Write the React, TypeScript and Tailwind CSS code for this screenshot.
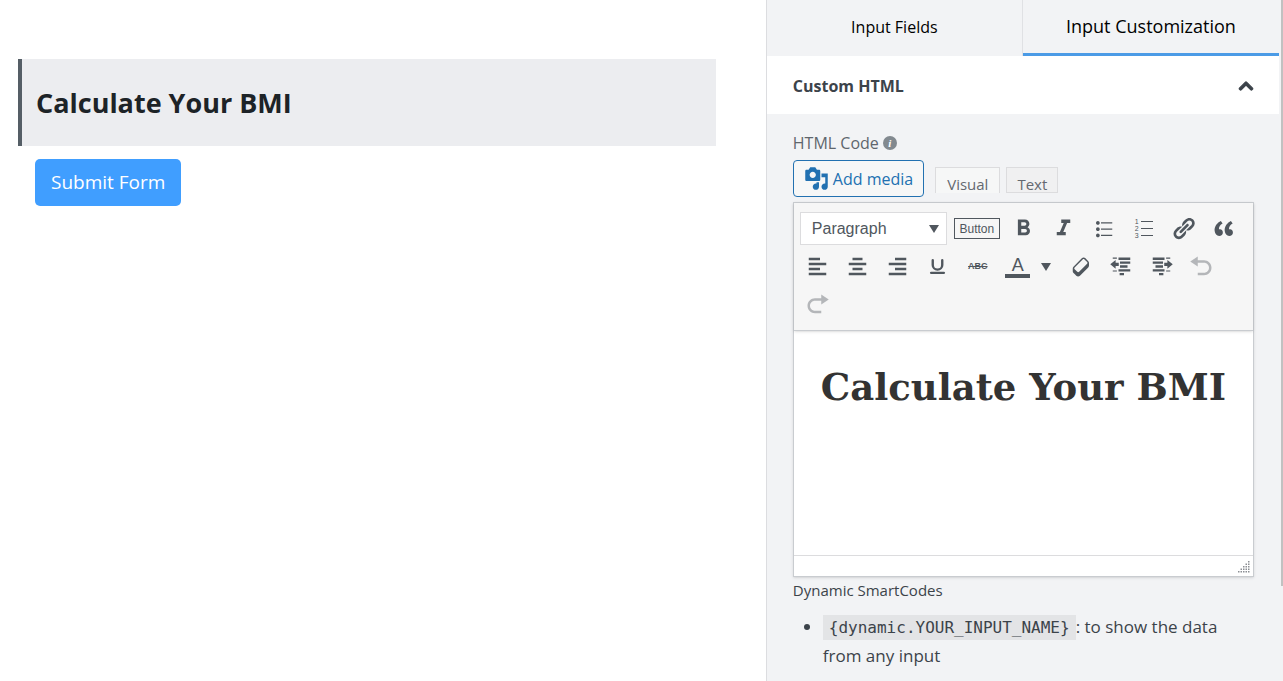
import { useState } from "react";
import type { ReactNode } from "react";
import { Underline } from "lucide-react";
import { FaChevronUp } from "react-icons/fa";
import { MdFormatBold, MdFormatItalic } from "react-icons/md";

const icons = {
  media:
    "M13 11V4c0-.55-.45-1-1-1h-1.67L9 1H5L3.67 3H2c-.55 0-1 .45-1 1v7c0 .55.45 1 1 1h10c.55 0 1-.45 1-1zM7 4.5c1.38 0 2.5 1.12 2.5 2.5S8.38 9.5 7 9.5 4.5 8.38 4.5 7 5.62 4.5 7 4.5zM14 6h5v10.5c0 1.38-1.12 2.5-2.5 2.5S14 17.88 14 16.5s1.12-2.5 2.5-2.5c.17 0 .34.02.5.05V9h-3V6zm-4 8.05V13h2v3.5c0 1.38-1.12 2.5-2.5 2.5S7 17.88 7 16.5 8.12 14 9.5 14c.17 0 .34.02.5.05z",
  bullets:
    "M5.5 7C4.67 7 4 6.33 4 5.5 4 4.68 4.67 4 5.5 4 6.32 4 7 4.68 7 5.5 7 6.33 6.32 7 5.5 7zM8 5h9v1H8V5zm-2.5 7c-.83 0-1.5-.67-1.5-1.5C4 9.68 4.67 9 5.5 9c.82 0 1.5.68 1.5 1.5 0 .83-.68 1.5-1.5 1.5zM8 10h9v1H8v-1zm-2.5 7c-.83 0-1.5-.67-1.5-1.5 0-.82.67-1.5 1.5-1.5.82 0 1.5.68 1.5 1.5 0 .83-.68 1.5-1.5 1.5zM8 15h9v1H8v-1z",
  link: "M17.74 2.76c1.68 1.69 1.68 4.41 0 6.1l-1.53 1.52c-1.12 1.12-2.7 1.47-4.14 1.09l2.62-2.61.76-.77.76-.76c.84-.84.84-2.2 0-3.04-.84-.85-2.2-.85-3.04 0l-.77.76-3.38 3.38c-.37-1.44-.02-3.02 1.1-4.14l1.52-1.53c1.69-1.68 4.42-1.68 6.1 0zM8.59 13.43l5.34-5.34c.42-.42.42-1.1 0-1.52-.44-.43-1.13-.39-1.53 0l-5.33 5.34c-.42.42-.42 1.1 0 1.52.44.43 1.13.39 1.52 0zm-.76 2.29l4.14-4.15c.38 1.44.03 3.02-1.09 4.14l-1.52 1.53c-1.69 1.68-4.41 1.68-6.1 0-1.68-1.68-1.68-4.42 0-6.1l1.53-1.52c1.12-1.12 2.7-1.47 4.14-1.1l-4.14 4.15c-.85.84-.85 2.2 0 3.05.84.84 2.2.84 3.04 0z",
  quote:
    "M9.49 13.22c0-.74-.2-1.38-.61-1.9-.62-.78-1.83-.88-2.53-.72-.29-1.65 1.11-3.75 2.92-4.65L7.88 4c-2.73 1.3-5.42 4.28-4.96 8.05C3.21 14.43 4.59 16 6.54 16c.85 0 1.56-.25 2.12-.75s.83-1.18.83-2.03zm8.05 0c0-.74-.2-1.38-.61-1.9-.63-.78-1.83-.88-2.53-.72-.29-1.65 1.11-3.75 2.92-4.65L15.93 4c-2.73 1.3-5.41 4.28-4.95 8.05.29 2.38 1.66 3.95 3.61 3.95.85 0 1.56-.25 2.12-.75s.83-1.18.83-2.03z",
  left: "M12 5V3H3v2h9zm5 4V7H3v2h14zm-5 4v-2H3v2h9zm5 4v-2H3v2h14z",
  center: "M14 5V3H6v2h8zm3 4V7H3v2h14zm-3 4v-2H6v2h8zm3 4v-2H3v2h14z",
  right: "M17 5V3H8v2h9zm0 4V7H3v2h14zm0 4v-2H8v2h9zm0 4v-2H3v2h14z",
  eraser:
    "M14.29 4.59l1.1 1.11c.41.4.61.94.61 1.47v2.12c0 .53-.2 1.07-.61 1.47l-6.63 6.63c-.4.41-.94.61-1.47.61s-1.07-.2-1.47-.61l-1.11-1.1-1.1-1.11c-.41-.4-.61-.94-.61-1.47v-2.12c0-.54.2-1.07.61-1.48l6.63-6.62c.4-.41.94-.61 1.47-.61s1.06.2 1.47.61zm-6.21 9.7l6.42-6.42c.39-.39.39-1.03 0-1.43L12.36 4.3c-.19-.19-.45-.29-.72-.29s-.52.1-.71.29l-6.42 6.42c-.39.4-.39 1.04 0 1.43l2.14 2.14c.38.38 1.04.38 1.43 0z",
  outdent:
    "M3 2.800h3.300v.9H3zM7.600 2.800H17v1.900H7.600zM8.800 5.900H17v1.900H8.800zM5.300 4.800v2.200h2.500v2.500H5.300v2.200L1 8.250zM8.800 9h6v1.900h-6zM7.600 12.100H17V14H7.600zM3 13.100h3.300v.9H3zM8.500 15.200H12V17H8.500z",
  indent:
    "M13.700 2.800H17v.9h-3.300zM3 2.800h9.400v1.900H3zM3 5.900h8.200v1.900H3zM14.700 4.800v2.200h-2.500v2.500h2.500v2.200L19 8.250zM5.200 9h6v1.900h-6zM3 12.100h9.400V14H3zM13.700 13.100H17v.9h-3.300zM8 15.200h3.500V17H8z",
  undo: "M12 5H7V2L1 6l6 4V7h5c2.2 0 4 1.8 4 4s-1.8 4-4 4H7v2h5c3.3 0 6-2.7 6-6s-2.7-6-6-6z",
  redo: "M8 5h5V2l6 4-6 4V7H8c-2.2 0-4 1.8-4 4s1.8 4 4 4h5v2H8c-3.3 0-6-2.7-6-6s2.7-6 6-6z",
};

const Icon = ({ name }: { name: keyof typeof icons }) => (
  <svg viewBox="0 0 20 20" className="size-[25px] shrink-0" fill="currentColor" aria-hidden="true">
    <path d={icons[name]} />
  </svg>
);

const Caret = () => (
  <svg viewBox="0 0 10 8" className="h-2 w-2.5" aria-hidden="true">
    <path d="M0 0h10L5 8z" fill="#50575e" />
  </svg>
);

const Tool = ({ label, children, disabled }: { label: string; children: ReactNode; disabled?: boolean }) => (
  <button
    type="button"
    aria-label={label}
    disabled={disabled}
    className="flex h-[37px] w-10 items-center justify-center text-[#50575e] disabled:text-[#b4b6b9]"
  >
    {children}
  </button>
);

const NumberedList = () => (
  <span className="flex flex-col">
    {[1, 2, 3].map((n) => (
      <span key={n} className="flex h-[7px] items-center gap-0.5 font-['Liberation_Sans'] text-[7px] leading-[7px]">
        {n}
        <span className="h-px w-3 bg-[#50575e]" />
      </span>
    ))}
  </span>
);

const Preview = () => (
  <main className="min-w-0 flex-1 pt-[59px] pr-[50px] pl-[18px]">
    <div className="border-l-4 border-[#555e66] bg-[#ecedf0] px-3.5 py-6">
      <h1 className="text-[27px] leading-[39px] font-bold text-[#1d2327]">Calculate Your BMI</h1>
    </div>
    <button type="submit" className="mt-[13px] ml-[17px] h-[47px] rounded-[5px] bg-[#409eff] px-4 text-[19px] text-white">
      Submit Form
    </button>
  </main>
);

const Toolbar = () => {
  const [format, setFormat] = useState<string>("Paragraph");

  return (
    <div className="flex flex-col gap-px border-b border-[#c9ccd0] bg-[#f6f6f6] px-1 py-[7px] shadow-sm">
      <div className="flex flex-wrap items-center">
        <div className="relative mr-[7px] ml-0.5">
          <select
            aria-label="Format"
            value={format}
            onChange={(e) => setFormat(e.target.value)}
            className="block h-[33px] w-[147px] appearance-none border border-[#dcdcde] bg-white px-[11px] font-['Liberation_Sans'] text-base text-[#50575e]"
          >
            <option>Paragraph</option>
            <option>Heading 1</option>
            <option>Heading 2</option>
          </select>
          <span className="pointer-events-none absolute inset-y-0 right-2 flex items-center">
            <Caret />
          </span>
        </div>
        <button
          type="button"
          className="mr-1 h-[21px] w-[46px] border border-[#50575e] font-['Liberation_Sans'] text-[12px] leading-4 text-[#50575e]"
        >
          Button
        </button>
        <Tool label="Bold"><MdFormatBold className="size-[27px]" /></Tool>
        <Tool label="Italic"><MdFormatItalic className="size-[27px]" /></Tool>
        <Tool label="Bulleted list"><Icon name="bullets" /></Tool>
        <Tool label="Numbered list"><NumberedList /></Tool>
        <Tool label="Link"><Icon name="link" /></Tool>
        <Tool label="Quote"><Icon name="quote" /></Tool>
      </div>
      <div className="flex flex-wrap items-center">
        <Tool label="Align left"><Icon name="left" /></Tool>
        <Tool label="Align center"><Icon name="center" /></Tool>
        <Tool label="Align right"><Icon name="right" /></Tool>
        <Tool label="Underline"><Underline className="size-[19px]" strokeWidth={3} /></Tool>
        <Tool label="Strikethrough">
          <span className="font-['Liberation_Sans'] text-[9px] font-bold line-through">ABC</span>
        </Tool>
        <Tool label="Text color">
          <span className="w-[25px] border-b-4 border-[#50575e] font-['Liberation_Sans'] text-lg leading-[18px]">A</span>
        </Tool>
        <button type="button" aria-label="More colors" className="flex h-[37px] w-6 items-center justify-start pl-[3px]">
          <Caret />
        </button>
        <Tool label="Clear formatting"><Icon name="eraser" /></Tool>
        <Tool label="Decrease indent"><Icon name="outdent" /></Tool>
        <Tool label="Increase indent"><Icon name="indent" /></Tool>
        <Tool label="Undo" disabled><Icon name="undo" /></Tool>
      </div>
      <div className="flex">
        <Tool label="Redo" disabled><Icon name="redo" /></Tool>
      </div>
    </div>
  );
};

const Editor = () => (
  <div className="mt-[5px] border border-[#c9ccd0] bg-white shadow-sm">
    <Toolbar />
    <div
      contentEditable
      suppressContentEditableWarning
      role="textbox"
      aria-label="HTML Code"
      className="h-[224px] px-3 pt-7 text-center font-['DejaVu_Serif',serif] text-[37px] leading-[56px] font-bold text-[#333]"
    >
      Calculate Your BMI
    </div>
    <div className="flex h-[21px] items-end justify-end border-t border-[#dcdcde] p-[3px]">
      <svg viewBox="0 0 12 12" className="size-3" fill="#8c8f94" aria-hidden="true">
        <path d="M10 0h1.500v1.500H10zM7.500 2.500H9V4H7.500zM10 2.500h1.500V4H10zM5 5h1.500v1.500H5zM7.500 5H9v1.500H7.500zM10 5h1.500v1.500H10zM2.500 7.500H4V9H2.500zM5 7.500h1.500V9H5zM7.500 7.500H9V9H7.500zM10 7.500h1.500V9H10zM0 10h1.500v1.500H0zM2.500 10H4v1.500H2.500zM5 10h1.500v1.500H5zM7.500 10H9v1.500H7.500zM10 10h1.500v1.500H10z" />
      </svg>
    </div>
  </div>
);

const Sidebar = () => {
  const [open, setOpen] = useState<boolean>(true);

  return (
    <aside className="w-2/5 shrink-0 border-l border-[#dcdde0] bg-[#f2f3f5]">
      <div className="grid grid-cols-2 text-black">
        <button type="button" className="h-14 border-r border-[#e0e1e4] pb-0.5 text-base font-medium">
          Input Fields
        </button>
        <button type="button" className="h-14 border-b-[3px] border-[#4b9be6] pb-0.5 text-lg font-medium">
          Input Customization
        </button>
      </div>
      <button
        type="button"
        aria-expanded={open}
        onClick={() => setOpen(!open)}
        className="flex h-[58px] w-full items-center justify-between bg-white pt-0.5 pr-[25px] pl-[26px] text-base font-bold text-[#3c434a]"
      >
        Custom HTML
        <FaChevronUp className="size-4" stroke="currentColor" strokeWidth={36} />
      </button>
      {open && (
        <div className="pt-[18px] pr-[25px] pl-[26px] text-[#3c434a]">
          <div className="flex items-center gap-1 text-base leading-[22px] text-[#5f666d]">
            HTML Code
            <span className="flex size-[14px] items-center justify-center rounded-full bg-[#82898f] font-['Liberation_Serif'] text-[11px] leading-none font-bold text-white italic">
              i
            </span>
          </div>
          <div className="mt-1.5 flex items-start">
            <button
              type="button"
              className="flex h-[37px] items-center gap-1 rounded-[4px] border border-[#2271b1] bg-[#f6f7f7] px-2.5 text-base text-[#2271b1]"
            >
              <Icon name="media" />
              Add media
            </button>
            <button type="button" className="mt-[7px] ml-[11px] h-[26px] border border-b-0 border-[#dcdcde] bg-[#f6f7f7] px-[11px] pt-[7px] text-[15px] leading-[18px] text-[#646970]">
              Visual
            </button>
            <button type="button" className="mt-[7px] ml-1.5 h-[26px] border border-[#dcdcde] bg-[#f0f0f1] px-2.5 pt-[7px] text-[15px] leading-[18px] text-[#646970]">
              Text
            </button>
          </div>
          <Editor />
          <p className="mt-0.5 text-[15px] leading-[22px]">Dynamic SmartCodes</p>
          <ul className="mt-3 list-disc pl-[30px] text-[17px] leading-7">
            <li>
              <code className="bg-[#e3e4e6] px-1.5 py-[3px] font-['DejaVu_Sans_Mono',monospace] text-base leading-7">
                {"{dynamic.YOUR_INPUT_NAME}"}
              </code>
              : to show the data from any input
            </li>
          </ul>
        </div>
      )}
    </aside>
  );
};

const App = () => {
  return (
    <div className="flex h-screen overflow-hidden bg-white font-['Open_Sans','Noto_Sans',sans-serif]">
      <Preview />
      <Sidebar />
      <div className="flex w-1 shrink-0 justify-end bg-[#f2f3f5]">
        <div className="h-[86%] w-0.5 bg-[#c1c1c1]" />
      </div>
    </div>
  );
};

export default App;
